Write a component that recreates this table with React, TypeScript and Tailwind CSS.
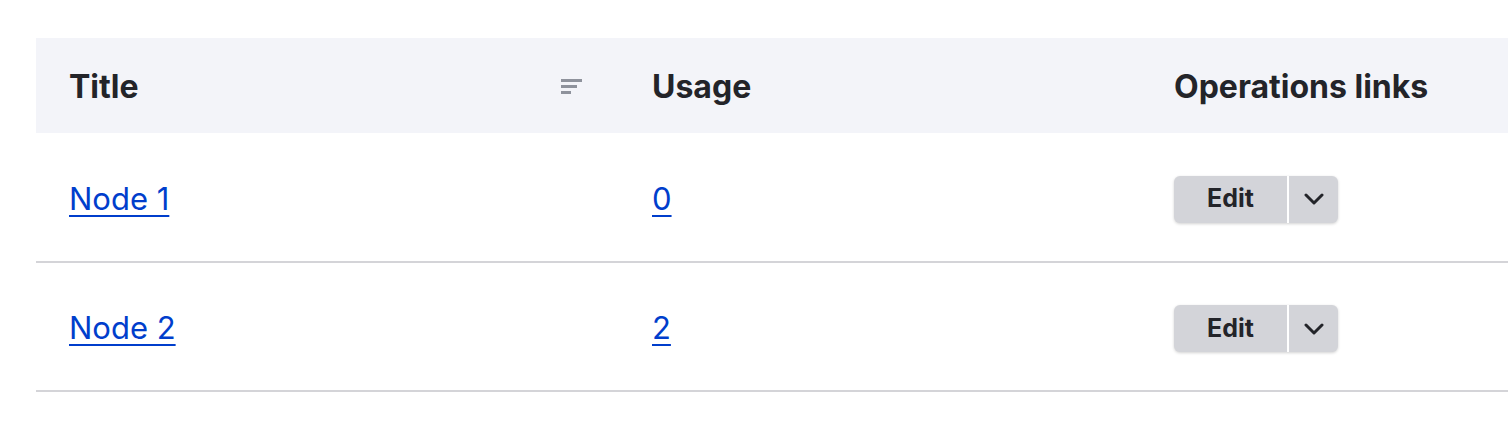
const rows = [
  { title: "Node 1", usage: "0" },
  { title: "Node 2", usage: "2" },
];

const SortIcon = () => (
  <svg width="22" height="16" viewBox="0 0 22 16" className="block">
    <rect x="0" y="0" width="21" height="3" fill="#8e929c" />
    <rect x="0" y="6" width="16" height="3" fill="#8e929c" />
    <rect x="0" y="12" width="10" height="3" fill="#8e929c" />
  </svg>
);

const Chevron = () => (
  <svg width="20" height="12" viewBox="0 0 20 12" className="block">
    <path d="M2 2 L10 10 L18 2" fill="none" stroke="#232429" strokeWidth="3" strokeLinecap="round" strokeLinejoin="round" />
  </svg>
);

const DropButton = () => (
  <div className="flex h-[47px] w-[164px] rounded-[6px] bg-[#d3d4d9] shadow-[0_1px_3px_rgba(0,0,0,0.18)] overflow-hidden">
    <button className="flex w-[113px] items-center justify-center text-[25px] font-bold text-[#232429]">
      Edit
    </button>
    <div className="w-[2px] bg-white" />
    <button className="flex flex-1 items-center justify-center">
      <Chevron />
    </button>
  </div>
);

export default function App() {
  return (
    <div className="min-h-[424px] bg-white pt-[38px] pl-[36px] font-['Inter','Liberation_Sans',sans-serif]">
      <table className="w-[1472px] border-collapse">
        <thead>
          <tr className="h-[95px] bg-[#f3f4f9]">
            <th className="w-[583px] pl-[33px] pr-[36px] pt-[2px] text-left text-[32px] font-bold text-[#232429]">
              <div className="flex items-center justify-between">
                <span>Title</span>
                <SortIcon />
              </div>
            </th>
            <th className="w-[522px] pl-[33px] pt-[2px] text-left text-[32px] font-bold text-[#232429]">Usage</th>
            <th className="pl-[33px] pt-[2px] text-left text-[32px] font-bold text-[#232429]">Operations links</th>
          </tr>
        </thead>
        <tbody>
          {rows.map((r) => (
            <tr key={r.title} className="h-[129px] border-b-2 border-[#d4d4d8]">
              <td className="pl-[33px] pt-[4px] text-[31px]">
                <a href="#" className="text-[#003ecc] underline decoration-2 underline-offset-[5px]">
                  {r.title}
                </a>
              </td>
              <td className="pl-[33px] pt-[4px] text-[31px]">
                <a href="#" className="text-[#003ecc] underline decoration-2 underline-offset-[5px]">
                  {r.usage}
                </a>
              </td>
              <td className="pl-[33px] pt-[4px]">
                <DropButton />
              </td>
            </tr>
          ))}
        </tbody>
      </table>
    </div>
  );
}
